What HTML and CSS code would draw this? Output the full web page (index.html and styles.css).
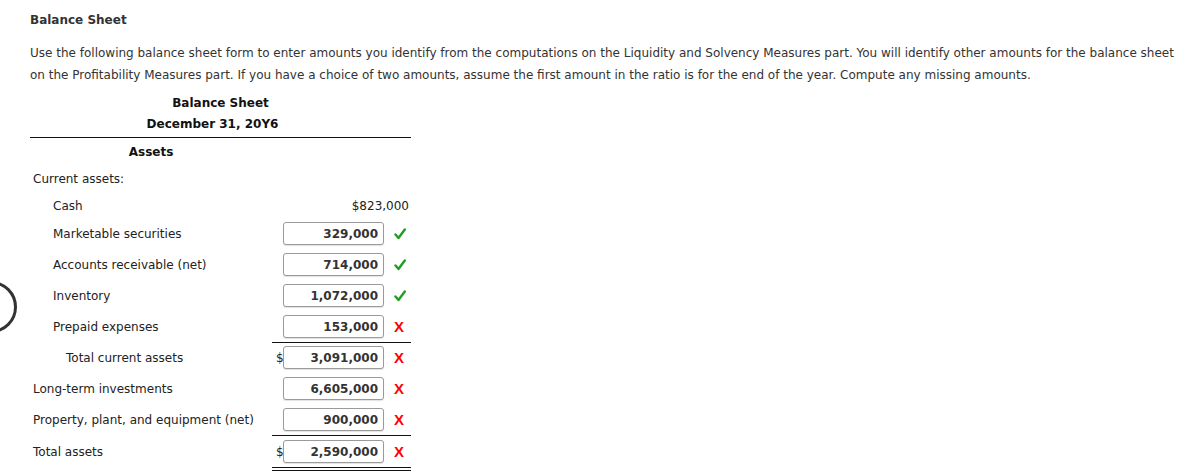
FILE: index.html
```html
<!DOCTYPE html>
<html>
<head>
<meta charset="utf-8">
<link rel="stylesheet" href="styles.css">
</head>
<body>
<div class="ring"></div>
<div class="page">
  <h1 class="title">Balance Sheet</h1>
  <p class="intro">Use the following balance sheet form to enter amounts you identify from the computations on the Liquidity and Solvency Measures part. You will identify other amounts for the balance sheet on the Profitability Measures part. If you have a choice of two amounts, assume the first amount in the ratio is for the end of the year. Compute any missing amounts.</p>

  <div class="sheet">
    <div class="sheet-head">
      <div class="sh-title">Balance Sheet</div>
      <div class="sh-date">December 31, 20Y6</div>
    </div>
    <div class="section-title">Assets</div>
    <div class="row r-cur"><div class="label l0">Current assets:</div></div>
    <div class="row r-cash"><div class="label l1">Cash</div><div class="static">$823,000</div></div>
    <div class="row"><div class="label l1">Marketable securities</div><div class="dollar"></div><input class="amt" value="329,000" readonly><span class="ok"><svg width="12" height="12" viewBox="0 0 12 12"><path d="M1.5 6.5 L4.5 10 L10.8 1.5" fill="none" stroke="#1f9e1f" stroke-width="2.4" stroke-linecap="round" stroke-linejoin="round"/></svg></span></div>
    <div class="row"><div class="label l1">Accounts receivable (net)</div><div class="dollar"></div><input class="amt" value="714,000" readonly><span class="ok"><svg width="12" height="12" viewBox="0 0 12 12"><path d="M1.5 6.5 L4.5 10 L10.8 1.5" fill="none" stroke="#1f9e1f" stroke-width="2.4" stroke-linecap="round" stroke-linejoin="round"/></svg></span></div>
    <div class="row"><div class="label l1">Inventory</div><div class="dollar"></div><input class="amt" value="1,072,000" readonly><span class="ok"><svg width="12" height="12" viewBox="0 0 12 12"><path d="M1.5 6.5 L4.5 10 L10.8 1.5" fill="none" stroke="#1f9e1f" stroke-width="2.4" stroke-linecap="round" stroke-linejoin="round"/></svg></span></div>
    <div class="row"><div class="label l1">Prepaid expenses</div><div class="dollar"></div><input class="amt" value="153,000" readonly><span class="bad">X</span></div>
    <div class="row total"><div class="label l2">Total current assets</div><div class="dollar">$</div><input class="amt" value="3,091,000" readonly><span class="bad">X</span></div>
    <div class="row"><div class="label l0">Long-term investments</div><div class="dollar"></div><input class="amt" value="6,605,000" readonly><span class="bad">X</span></div>
    <div class="row"><div class="label l0">Property, plant, and equipment (net)</div><div class="dollar"></div><input class="amt" value="900,000" readonly><span class="bad">X</span></div>
    <div class="row total grand"><div class="label l0">Total assets</div><div class="dollar">$</div><input class="amt" value="2,590,000" readonly><span class="bad">X</span></div>
  </div>
</div>
</body>
</html>
```
FILE: styles.css
```css
html, body {
  margin: 0;
  padding: 0;
  background: #fff;
}
body {
  font-family: "DejaVu Sans", Verdana, sans-serif;
  font-size: 12px;
  color: #333;
  position: relative;
  overflow: hidden;
  height: 475px;
}
.ring {
  position: absolute;
  left: -35px;
  top: 281px;
  width: 46px;
  height: 46px;
  border: 3px solid #333;
  border-radius: 50%;
}
.page {
  padding: 11px 0 0 30px;
}
.title {
  font-size: 12px;
  font-weight: bold;
  margin: 0;
  line-height: 18px;
}
.intro {
  margin: 13px 0 0 0;
  line-height: 22px;
  width: 1155px;
}
.sheet {
  width: 381px;
  margin-top: 7px;
  color: #222;
}
.sheet-head {
  text-align: center;
  font-weight: bold;
  color: #111;
  border-bottom: 1px solid #111;
  padding-bottom: 2px;
  width: 381px;
}
.sh-title {
  line-height: 21px;
}
.sh-date {
  line-height: 21px;
  padding-right: 16px;
}
.section-title {
  font-weight: bold;
  color: #111;
  width: 242px;
  text-align: center;
  line-height: 20px;
  margin-top: 4px;
}
.row {
  display: grid;
  grid-template-columns: 242px 11px 101px 27px;
  align-items: center;
  height: 31px;
}
.r-cur { height: 30px; margin-top: 2px; }
.r-cash { height: 24px; }
.label { white-space: nowrap; }
.l0 { padding-left: 3px; }
.l1 { padding-left: 23px; }
.l2 { padding-left: 36px; }
.static {
  grid-column: 2 / 5;
  text-align: right;
  padding-right: 2px;
}
.dollar {
  text-align: left;
  padding-left: 4px;
}
.amt {
  box-sizing: border-box;
  width: 101px;
  height: 23px;
  border: 1px solid #9a9a9a;
  border-radius: 3px;
  box-shadow: 0 1px 1px rgba(0,0,0,0.12);
  font-family: "DejaVu Sans", Verdana, sans-serif;
  font-size: 12px;
  font-weight: bold;
  color: #333;
  text-align: right;
  padding: 0 5px 0 2px;
  margin: 0;
  background: #fff;
  outline: none;
}
.ok, .bad {
  display: flex;
  align-items: center;
  padding-left: 10px;
}
.bad {
  color: #f00;
  font-weight: bold;
  font-family: "Liberation Sans", Arial, sans-serif;
  font-size: 15px;
}
.total {
  position: relative;
}
.total::before {
  content: "";
  position: absolute;
  left: 242px;
  right: 0;
  top: 0;
  border-top: 1px solid #111;
}
.grand {
  height: 33px;
}
.grand::after {
  content: "";
  position: absolute;
  left: 242px;
  right: 0;
  bottom: -3px;
  height: 2px;
  border-top: 1px solid #111;
  border-bottom: 1px solid #111;
}
```
